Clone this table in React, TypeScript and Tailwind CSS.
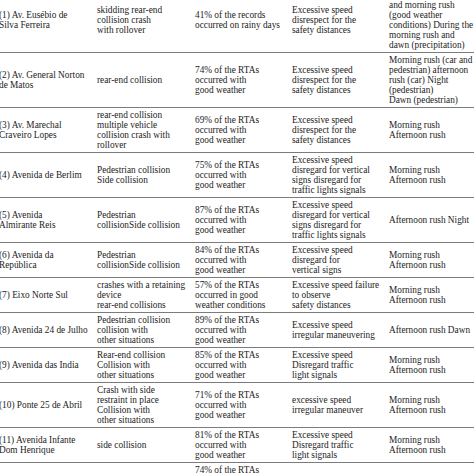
const rows: string[][][] = [
  [
    ['(1) Av. Eusébio de', 'Silva Ferreira'],
    ['skidding rear-end', 'collision crash', 'with rollover'],
    ['41% of the records', 'occurred on rainy days'],
    ['Excessive speed', 'disrespect for the', 'safety distances'],
    ['Afternoon rush (car)', 'and morning rush', '(good weather', 'conditions) During the', 'morning rush and', 'dawn (precipitation)'],
  ],
  [
    ['(2) Av. General Norton', 'de Matos'],
    ['rear-end collision'],
    ['74% of the RTAs', 'occurred with', 'good weather'],
    ['Excessive speed', 'disrespect for the', 'safety distances'],
    ['Morning rush (car and', 'pedestrian) afternoon', 'rush (car) Night', '(pedestrian)', 'Dawn (pedestrian)'],
  ],
  [
    ['(3) Av. Marechal', 'Craveiro Lopes'],
    ['rear-end collision', 'multiple vehicle', 'collision crash with', 'rollover'],
    ['69% of the RTAs', 'occurred with', 'good weather'],
    ['Excessive speed', 'disrespect for the', 'safety distances'],
    ['Morning rush', 'Afternoon rush'],
  ],
  [
    ['(4) Avenida de Berlim'],
    ['Pedestrian collision', 'Side collision'],
    ['75% of the RTAs', 'occurred with', 'good weather'],
    ['Excessive speed', 'disregard for vertical', 'signs disregard for', 'traffic lights signals'],
    ['Morning rush', 'Afternoon rush'],
  ],
  [
    ['(5) Avenida', 'Almirante Reis'],
    ['Pedestrian', 'collisionSide collision'],
    ['87% of the RTAs', 'occurred with', 'good weather'],
    ['Excessive speed', 'disregard for vertical', 'signs disregard for', 'traffic lights signals'],
    ['Afternoon rush Night'],
  ],
  [
    ['(6) Avenida da', 'República'],
    ['Pedestrian', 'collisionSide collision'],
    ['84% of the RTAs', 'occurred with', 'good weather'],
    ['Excessive speed', 'disregard for', 'vertical signs'],
    ['Morning rush', 'Afternoon rush'],
  ],
  [
    ['(7) Eixo Norte Sul'],
    ['crashes with a retaining', 'device', 'rear-end collisions'],
    ['57% of the RTAs', 'occurred in good', 'weather conditions'],
    ['Excessive speed failure', 'to observe', 'safety distances'],
    ['Morning rush', 'Afternoon rush'],
  ],
  [
    ['(8) Avenida 24 de Julho'],
    ['Pedestrian collision', 'collision with', 'other situations'],
    ['89% of the RTAs', 'occurred with', 'good weather'],
    ['Excessive speed', 'irregular maneuvering'],
    ['Afternoon rush Dawn'],
  ],
  [
    ['(9) Avenida das India'],
    ['Rear-end collision', 'Collision with', 'other situations'],
    ['85% of the RTAs', 'occurred with', 'good weather'],
    ['Excessive speed', 'Disregard traffic', 'light signals'],
    ['Morning rush', 'Afternoon rush'],
  ],
  [
    ['(10) Ponte 25 de Abril'],
    ['Crash with side', 'restraint in place', 'Collision with', 'other situations'],
    ['71% of the RTAs', 'occurred with', 'good weather'],
    ['excessive speed', 'irregular maneuver'],
    ['Morning rush', 'Afternoon rush'],
  ],
  [
    ['(11) Avenida Infante', 'Dom Henrique'],
    ['side collision'],
    ['81% of the RTAs', 'occurred with', 'good weather'],
    ['Excessive speed', 'Disregard traffic', 'light signals'],
    ['Morning rush', 'Afternoon rush'],
  ],
  [
    ['(12) Avenida Lusíada'],
    ['side collision'],
    ['74% of the RTAs', 'occurred with', 'good weather', 'conditions'],
    ['Excessive speed'],
    ['Morning rush'],
  ],
];

export default function App() {
  return (
    <div className="w-[474px] h-[474px] overflow-hidden bg-white">
      <div
        className="-ml-[6px] -mt-[12px] w-[500px] text-[#1c1c1c] text-[9.3px] leading-[10px]"
        style={{ fontFamily: '"Liberation Serif", "Times New Roman", serif' }}
      >
        {rows.map((row, i) => (
          <div
            key={i}
            className="grid grid-cols-[98px_98px_97px_97px_110px] border-b border-[#7c7c7c]"
          >
            {row.map((cell, j) => (
              <div key={j} className="flex flex-col justify-center pl-[5px] py-[2px]">
                {cell.map((line, k) => (
                  <span key={k} className="block whitespace-nowrap">
                    {line}
                  </span>
                ))}
              </div>
            ))}
          </div>
        ))}
      </div>
    </div>
  );
}
